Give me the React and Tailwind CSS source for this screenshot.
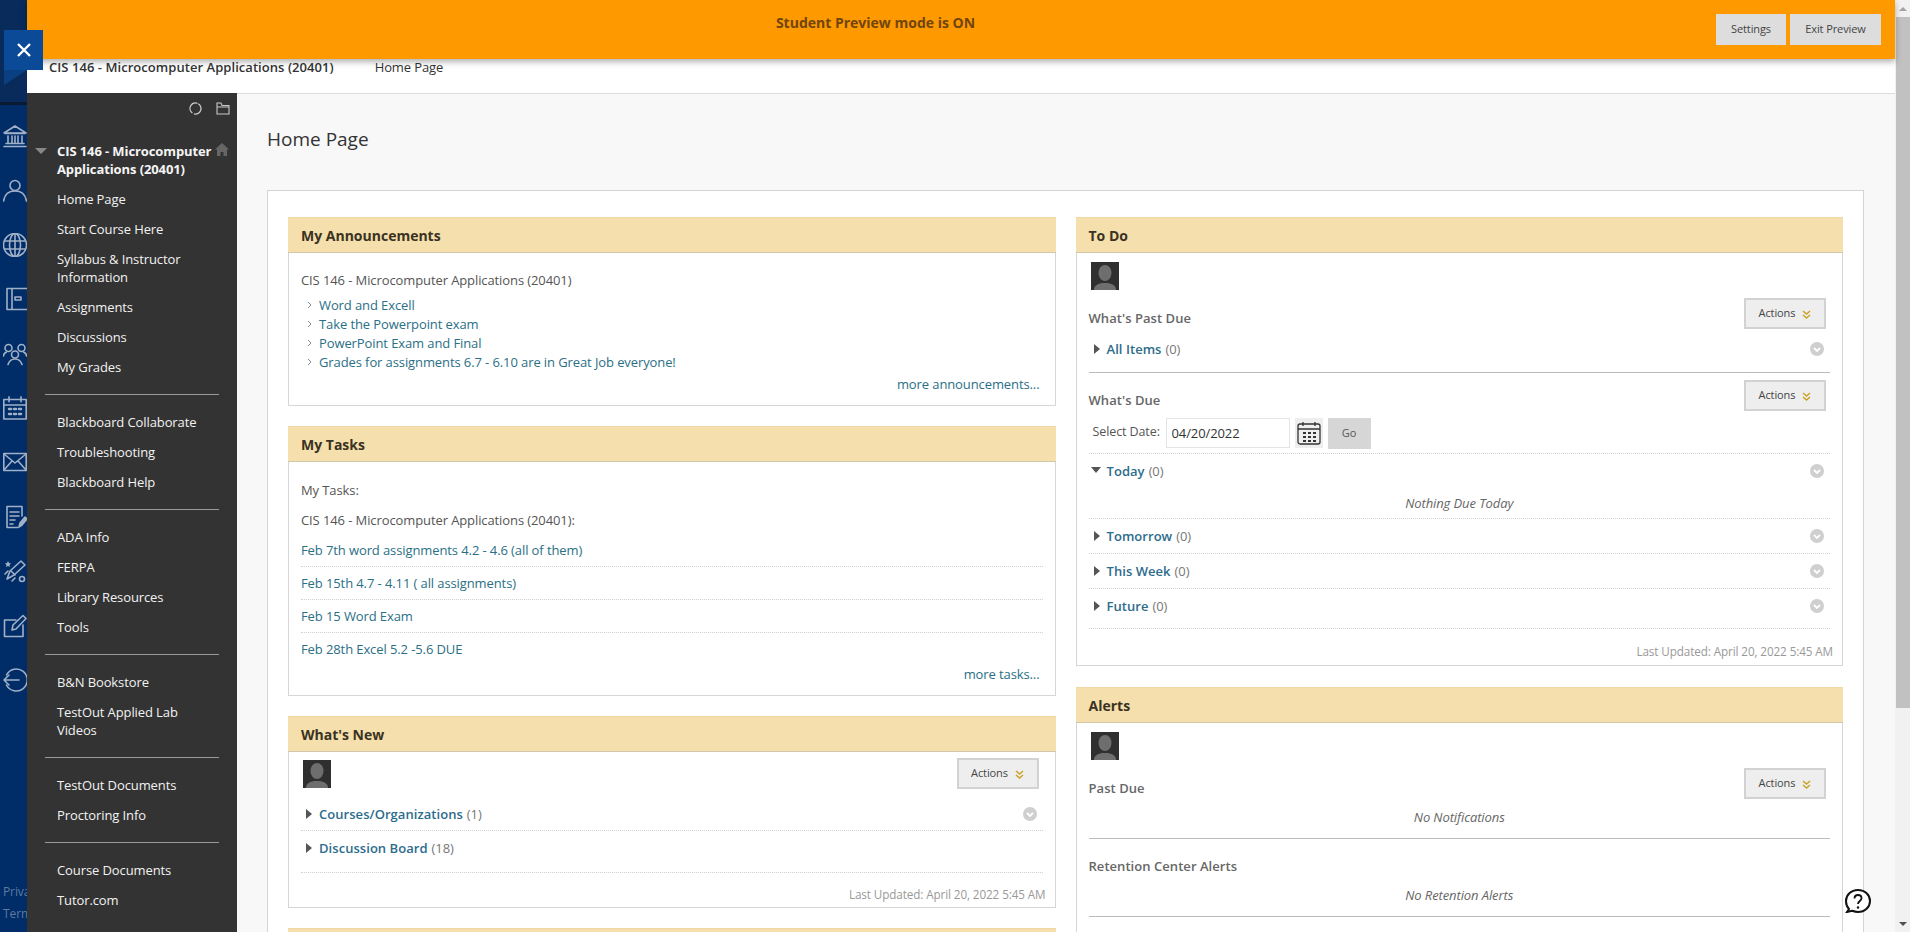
import React from 'react'

const navGroups = [
  ['Home Page', 'Start Course Here', 'Syllabus & Instructor Information', 'Assignments', 'Discussions', 'My Grades'],
  ['Blackboard Collaborate', 'Troubleshooting', 'Blackboard Help'],
  ['ADA Info', 'FERPA', 'Library Resources', 'Tools'],
  ['B&N Bookstore', 'TestOut Applied Lab Videos'],
  ['TestOut Documents', 'Proctoring Info'],
  ['Course Documents', 'Tutor.com'],
]

const StripIcon = ({ children }) => (
  <svg width="24" height="24" viewBox="0 0 24 24" fill="none" stroke="#a0b0c6" strokeWidth="1.6" strokeLinecap="round" strokeLinejoin="round">
    {children}
  </svg>
)

const stripIcons = [
  <><path d="M1 9 12 2l11 7z" /><path d="M2 9.500h20M5 12v7M9 12v7M12 12v7M15 12v7M19 12v7M3 19.500h18M1 22.500h22" /></>,
  <><circle cx="12" cy="7.500" r="5" /><path d="M0.500 23c1-6 5-10 11.500-10s10.500 4 11.500 10" /></>,
  <><circle cx="12" cy="12" r="11.500" /><ellipse cx="12" cy="12" rx="5.500" ry="11.500" /><path d="M1.500 8h21M1.500 16h21M12 1v22" /></>,
  <><path d="M4 1.500h20M4 1.500v21M4 22.500h20M9 1.500v21" /><rect x="12" y="10" width="6" height="3" /></>,
  <><circle cx="5.500" cy="6" r="3.500" /><circle cx="18.500" cy="6" r="3.500" /><circle cx="12" cy="12.500" r="3.500" /><path d="M0.500 14c0-2 1-3 3-4M23.500 14c0-2-1-3-3-4M5 22.500c1-3 3-5.500 7-5.500s6 2.500 7 5.500" /></>,
  <><rect x="0.800" y="3.500" width="22.400" height="19.500" /><path d="M1 9h22M6 0.800v5M18 0.800v5" /><path d="M6 13h2M11 13h2M16 13h2M6 18h2M11 18h2M16 18h2" strokeWidth="2.500" /></>,
  <><rect x="0.800" y="3.500" width="22.400" height="17" /><path d="m1 4 11 9 11-9M1 20l8-9M23 20l-8-9" /></>,
  <><path d="M19 11V1.500H4v21h11" /><path d="M7 7h9M7 11h9M7 15h5M7 19h3" /><path d="m16 22 1-4 5-6 2 2-5 6z" fill="#a0b0c6" /></>,
  <><path d="m4 20 3-8L18 2l4 4-11 10z" /><path d="m8 12 4 4M2 15l3-3M9 22l3-3" /><circle cx="19" cy="20" r="2.500" /><path d="m5 2 1 2 2 .5-1.500 1.500.3 2L5 7l-2 1 .5-2L2 4.500 4 4z" fill="#a0b0c6" stroke="none" /></>,
  <><path d="M20 11v11.500H1.500V6H13" /><path d="m9 16 1-5 10-9.500 3 3L13 15z" /></>,
  <><path d="M3.500 7a11 11 0 1 1 0 10" /><path d="M1 12h15M6 7l-5 5 5 5" /></>,
]

const Divider = () => <div className="h-px bg-[#999] ml-[18px] mr-[18px] my-[12px]" />

const Triangle = ({ open }) =>
  open ? (
    <span className="w-0 h-0 border-x-[5px] border-x-transparent border-t-[6px] border-t-[#555] ml-[-3px] mr-[6px] mt-[-3px]" />
  ) : (
    <span className="w-0 h-0 border-y-[5px] border-y-transparent border-l-[6px] border-l-[#555] mr-[7px]" />
  )

const Avatar = ({ className = '' }) => (
  <svg width="28" height="28" viewBox="0 0 28 28" className={`shrink-0 ${className}`}>
    <rect width="28" height="28" fill="#2f2f2f" />
    <ellipse cx="14" cy="11" rx="6.500" ry="8" fill="#6e6e6e" />
    <path d="M3 28c0-4 3-6 8-7h6c5 1 8 3 8 7z" fill="#6e6e6e" />
  </svg>
)

const ActionsButton = () => (
  <button className="w-[82px] h-[31px] bg-[#eee] border-2 border-[#d2d2d2] rounded-none flex items-center justify-center gap-[7px] text-[11px] text-[#444] pb-[1px]">
    Actions
    <svg width="9" height="9" viewBox="0 0 9 9" fill="none" stroke="#c9a227" strokeWidth="1.500" className="mt-[3px]">
      <path d="m1 1 3.500 3L8 1M1 5l3.500 3L8 5" />
    </svg>
  </button>
)

const CircleChevron = () => (
  <svg width="14" height="14" viewBox="0 0 14 14" fill="none" className="ml-auto mr-[6px]">
    <circle cx="7" cy="7" r="7" fill="#cfcfcf" />
    <path d="m4 6 3 3 3-3" stroke="#fff" strokeWidth="1.800" />
  </svg>
)

const Dotted = ({ className = '' }) => <div className={`border-t border-dotted border-[#d0d0d0] ${className}`} />

const Row = ({ label, count, open, chevron = true, className = '' }) => (
  <div className={`flex items-center pl-[5px] leading-[18px] text-[13px] ${className}`}>
    <Triangle open={open} />
    <span className="font-semibold tracking-[0.05px] text-[#2c6c8c]">{label}</span>
    <span className="ml-[4px] text-[#777]">({count})</span>
    {chevron && <CircleChevron />}
  </div>
)

const Module = ({ title, children }) => (
  <div className="bg-white">
    <div className="h-[36px] px-[13px] flex items-center bg-[#f5dfac] border-t border-[#eed8a4] border-b border-b-[#d2c7a8] text-[14px] font-bold tracking-normal text-[#3a3222]">
      {title}
    </div>
    <div className="border-x border-b border-[#d6d6d6]">{children}</div>
  </div>
)

const Heading = ({ children, className = '' }) => (
  <div className={`text-[13px] leading-[18px] font-semibold tracking-[0.05px] text-[#666] ${className}`}>{children}</div>
)

const Empty = ({ children, className = '' }) => (
  <div className={`text-center text-[13px] leading-[18px] italic text-[#666] ${className}`}>{children}</div>
)

const Updated = ({ className = '' }) => (
  <div className={`text-right text-[11.700px] leading-[18px] text-[#999] ${className}`}>Last Updated: April 20, 2022 5:45 AM</div>
)

export default function App() {
  return (
    <div className="relative flex h-[932px] w-full overflow-hidden bg-[#f8f8f8] text-[13px] tracking-[-0.1px] font-['Open_Sans',sans-serif]">
      {/* left strip */}
      <div className="w-[27px] shrink-0 flex flex-col overflow-hidden bg-[#002c68]">
        <div className="h-[105px] shrink-0 bg-[#082b5c] border-b-[3px] border-[#0b1a33]" />
        <div className="flex flex-col gap-[30.400px] pl-[3px] pt-[19px]">
          {stripIcons.map((icon, i) => (
            <StripIcon key={i}>{icon}</StripIcon>
          ))}
        </div>
        <div className="mt-auto pb-[7px] pl-[3px] text-[12px] leading-[22px] text-[#5f7b9f]">
          <div>Privacy</div>
          <div>Terms</div>
        </div>
      </div>

      {/* close flag */}
      <div className="absolute left-[4px] top-[30px] z-20">
        <button className="w-[39px] h-[40px] flex items-center justify-center bg-[#0a4a96] text-white">
          <svg width="18" height="18" viewBox="0 0 18 18" stroke="currentColor" strokeWidth="2.400">
            <path d="m3 3 12 12M15 3 3 15" />
          </svg>
        </button>
        <div className="w-0 h-0 border-t-[15px] border-t-[#0a3f82] border-r-[23px] border-r-transparent" />
      </div>

      <div className="flex-1 min-w-0 flex flex-col">
        <div className="relative z-10 h-[59px] shrink-0 flex items-start bg-[#ff9900] shadow-[0_3px_6px_rgba(0,0,0,0.3)]">
          <div className="flex-1 text-center pt-[14px] pl-[8px] text-[14px] leading-[18px] font-bold tracking-normal text-[#70450f]">
            Student Preview mode is ON
          </div>
          <div className="flex gap-[4px] pt-[14px] pr-[14px]">
            <button className="w-[70px] h-[31px] bg-[#dddddd] text-[11px] text-[#444]">Settings</button>
            <button className="w-[91px] h-[31px] bg-[#dddddd] text-[11px] text-[#444]">Exit Preview</button>
          </div>
        </div>

        <div className="h-[34px] shrink-0 bg-white pl-[22px] flex gap-[41px] leading-[18px] text-[13px] text-[#333]">
          <span className="-mt-px font-semibold tracking-[0.05px]">CIS 146 - Microcomputer Applications (20401)</span>
          <span className="-mt-px">Home Page</span>
        </div>

        <div className="flex-1 min-h-0 flex">
          {/* course menu */}
          <aside className="w-[210px] shrink-0 bg-[#333333] text-[#f2f2f2]">
            <div className="h-[30px] flex items-center justify-end gap-[13px] pr-[7px]">
              <svg width="15" height="15" viewBox="0 0 15 15" fill="none" stroke="#c9c9c9" strokeWidth="1.300">
                <circle cx="7.500" cy="7.500" r="5.500" strokeDasharray="15.500 1.780" transform="rotate(-60 7.500 7.500)" />
              </svg>
              <svg width="14" height="13" viewBox="0 0 14 13" fill="none" stroke="#c9c9c9" strokeWidth="1.100">
                <path d="M1 2.500V12h12V3.500H6L5 1H1zM1 5h12" />
              </svg>
            </div>
            <div className="relative pt-[19px] pb-[6px] pl-[30px] pr-[22px] font-bold leading-[18px] text-[#f5f5f5]">
              <span className="absolute left-[8px] top-[25px] w-0 h-0 border-x-[6px] border-x-transparent border-t-[6px] border-t-[#888]" />
              CIS 146 - Microcomputer Applications (20401)
              <svg width="14" height="13" viewBox="0 0 14 13" className="absolute left-[188px] top-[20px]" fill="#666">
                <path d="M7 0 14 6.500h-2V13H8.500V9h-3v4H2V6.500H0z" />
              </svg>
            </div>
            {navGroups.map((group, i) => (
              <div key={i}>
                {i > 0 && <Divider />}
                {group.map((item) => (
                  <div key={item} className="pl-[30px] pr-[22px] py-[6px] leading-[18px]">
                    {item}
                  </div>
                ))}
              </div>
            ))}
          </aside>

          <main className="flex-1 min-w-0 border-t border-[#dcdcdc] pt-[31px] pl-[30px] pr-[31px] overflow-hidden">
            <h1 className="text-[19px] leading-[28px] tracking-normal text-[#333]">Home Page</h1>
            <div className="mt-[37px] bg-white border border-[#d4d4d4] pt-[26px] px-[20px] grid grid-cols-2 gap-x-[20px]">
              <div className="flex flex-col gap-[20px]">
                <Module title="My Announcements">
                  <div className="px-[12px] pt-[18px] pb-[12px] leading-[18px]">
                    <div className="text-[#555]">CIS 146 - Microcomputer Applications (20401)</div>
                    <ul className="mt-[6px]">
                      {['Word and Excell', 'Take the Powerpoint exam', 'PowerPoint Exam and Final', 'Grades for assignments 6.7 - 6.10 are in Great Job everyone!'].map((t) => (
                        <li key={t} className="h-[19px] flex items-center text-[#2a6f86]">
                          <svg width="5" height="8" viewBox="0 0 5 8" fill="none" stroke="#888" strokeWidth="1" className="ml-[6px] mr-[7px]">
                            <path d="m1 1 3 3-3 3" />
                          </svg>
                          {t}
                        </li>
                      ))}
                    </ul>
                    <div className="mt-[4px] pr-[3px] text-right text-[#2a6f86]">more announcements...</div>
                  </div>
                </Module>

                <Module title="My Tasks">
                  <div className="px-[12px] pt-[19px] pb-[12px] leading-[18px]">
                    <div className="text-[#555]">My Tasks:</div>
                    <div className="mt-[12px] text-[#555]">CIS 146 - Microcomputer Applications (20401):</div>
                    <div className="mt-[12px] text-[#2a6f86]">
                      <div className="pb-[7px] border-b border-dotted border-[#d0d0d0]">Feb 7th word assignments 4.2 - 4.6 (all of them)</div>
                      <div className="py-[7px] border-b border-dotted border-[#d0d0d0]">Feb 15th 4.7 - 4.11 ( all assignments)</div>
                      <div className="py-[7px] border-b border-dotted border-[#d0d0d0]">Feb 15 Word Exam</div>
                      <div className="pt-[7px]">Feb 28th Excel 5.2 -5.6 DUE</div>
                    </div>
                    <div className="mt-[7px] pr-[3px] text-right text-[#2a6f86]">more tasks...</div>
                  </div>
                </Module>

                <Module title="What's New">
                  <div className="px-[12px]">
                    <div className="flex items-start justify-between pt-[6px] pr-[4px] pl-[2px]">
                      <Avatar className="mt-[2px]" />
                      <ActionsButton />
                    </div>
                    <Row label="Courses/Organizations" count="1" className="mt-[16px]" />
                    <Dotted className="mt-[7px]" />
                    <Row label="Discussion Board" count="18" chevron={false} className="mt-[8px]" />
                    <Dotted className="mt-[15px]" />
                    <Updated className="mt-[12px] mb-[4px] -mr-[3px]" />
                  </div>
                </Module>

                <Module title="" />
              </div>

              <div className="flex flex-col gap-[21px]">
                <Module title="To Do">
                  <div className="px-[12px]">
                    <div className="pt-[9px] pl-[2px]">
                      <Avatar />
                    </div>
                    <div className="mt-[8px] flex items-start justify-between pr-[4px]">
                      <Heading className="mt-[11px]">What's Past Due</Heading>
                      <ActionsButton />
                    </div>
                    <Row label="All Items" count="0" className="mt-[11px]" />
                    <div className="mt-[14px] h-px bg-[#bbb]" />
                    <div className="mt-[7px] flex items-start justify-between pr-[4px]">
                      <Heading className="mt-[11px]">What's Due</Heading>
                      <ActionsButton />
                    </div>
                    <div className="mt-[7px] flex items-start h-[31px] pl-[4px] text-[#555]">
                      <span className="mt-[5px] w-[73px] text-[12.500px] leading-[18px]">Select Date:</span>
                      <input
                        readOnly
                        value="04/20/2022"
                        className="w-[124px] h-[30px] px-[5px] border border-[#e4e4e4] text-[13px] text-[#333] outline-none"
                      />
                      <span className="ml-[5px] w-[28px] h-[30px] bg-[#eee] flex items-center justify-center">
                        <svg width="26" height="26" viewBox="0 0 26 26" fill="none" stroke="#333" strokeWidth="1.300">
                          <rect x="2" y="4" width="22" height="20" rx="2" />
                          <path d="M2 9h22M7 2v4M19 2v4" />
                          <path d="M7 13h3M12 13h3M17 13h3M7 17h3M12 17h3M17 17h3M7 21h3M12 21h3M17 21h3" strokeWidth="2.200" />
                        </svg>
                      </span>
                      <button className="ml-[5px] w-[43px] h-[31px] bg-[#d6d6d6] text-[11px] text-[#555]">Go</button>
                    </div>
                    <Dotted className="mt-[4px]" />
                    <Row label="Today" count="0" open className="mt-[8px]" />
                    <Empty className="mt-[14px]">Nothing Due Today</Empty>
                    <Dotted className="mt-[6px]" />
                    <Row label="Tomorrow" count="0" className="mt-[8px]" />
                    <Dotted className="mt-[8px]" />
                    <Row label="This Week" count="0" className="mt-[8px]" />
                    <Dotted className="mt-[8px]" />
                    <Row label="Future" count="0" className="mt-[8px]" />
                    <Dotted className="mt-[13px]" />
                    <Updated className="mt-[13px] mb-[5px] -mr-[3px]" />
                  </div>
                </Module>

                <Module title="Alerts">
                  <div className="px-[12px]">
                    <div className="pt-[9px] pl-[2px]">
                      <Avatar />
                    </div>
                    <div className="mt-[8px] flex items-start justify-between pr-[4px]">
                      <Heading className="mt-[11px]">Past Due</Heading>
                      <ActionsButton />
                    </div>
                    <Empty className="mt-[9px]">No Notifications</Empty>
                    <div className="mt-[12px] h-px bg-[#bbb]" />
                    <Heading className="mt-[18px]">Retention Center Alerts</Heading>
                    <Empty className="mt-[11px]">No Retention Alerts</Empty>
                    <div className="mt-[12px] h-px bg-[#bbb]" />
                    <div className="h-[40px]" />
                  </div>
                </Module>
              </div>
            </div>
          </main>
        </div>
      </div>

      {/* scrollbar */}
      <div className="w-[15px] shrink-0 flex flex-col items-center bg-[#f1f1f1]">
        <div className="h-[17px] flex items-center">
          <span className="w-0 h-0 border-x-[4px] border-x-transparent border-b-[4px] border-b-[#a3a3a3]" />
        </div>
        <div className="w-[14px] h-[691px] bg-[#c1c1c1]" />
        <div className="mt-auto h-[17px] flex items-center">
          <span className="w-0 h-0 border-x-[4px] border-x-transparent border-t-[4px] border-t-[#505050]" />
        </div>
      </div>

      {/* help bubble */}
      <svg width="26" height="24" viewBox="0 0 26 24" fill="none" className="absolute left-[1845px] top-[889px]">
        <path d="M4 20c-2-2-3-5-3-8C1 6 6 1 13 1s12 5 12 11-5 11-12 11c-2 0-4-.5-6-1.200L2 23z" stroke="#111" strokeWidth="2" fill="#fff" />
        <path d="M9.500 9.500C9.500 7.500 11 6 13 6s3.500 1.400 3.500 3.200c0 2.800-3.500 2.800-3.500 5.800" stroke="#111" strokeWidth="1.800" />
        <circle cx="13" cy="18.500" r="1.200" fill="#111" />
      </svg>
    </div>
  )
}
